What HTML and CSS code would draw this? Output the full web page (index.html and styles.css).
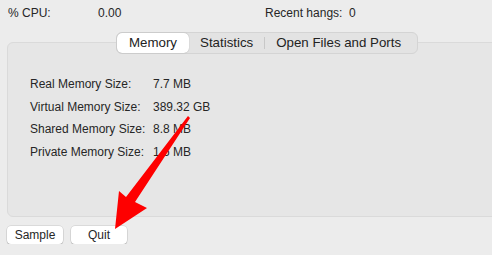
FILE: index.html
```html
<!DOCTYPE html>
<html lang="en">
<head>
  <meta charset="UTF-8">
  <title>Activity Monitor - Memory</title>
  <link rel="stylesheet" href="styles.css">
</head>
<body>
  <div class="window">
    <div class="stats-row">
      <span class="stat-label">% CPU:</span>
      <span class="stat-value">0.00</span>
      <span class="stat-hangs">Recent hangs:&nbsp; 0</span>
    </div>
    <div class="panel">
      <div class="tabs">
        <div class="tab active">Memory</div>
        <div class="tab">Statistics</div>
        <div class="tab-sep"></div>
        <div class="tab">Open Files and Ports</div>
      </div>
      <div class="mem-list">
        <div class="mem-row"><span class="mem-label">Real Memory Size:</span><span>7.7 MB</span></div>
        <div class="mem-row"><span class="mem-label">Virtual Memory Size:</span><span>389.32 GB</span></div>
        <div class="mem-row"><span class="mem-label">Shared Memory Size:</span><span>8.8 MB</span></div>
        <div class="mem-row"><span class="mem-label">Private Memory Size:</span><span>1.6 MB</span></div>
      </div>
    </div>
    <div class="actions">
      <button class="btn">Sample</button>
      <button class="btn">Quit</button>
    </div>
  </div>
  <svg class="arrow" width="492" height="255" viewBox="0 0 492 255">
    <polygon points="188,116 190,118 135,202 147,208 115,229 119,191 126,197" fill="#fe0000"/>
  </svg>
</body>
</html>
```

FILE: styles.css
```css
html, body {
  margin: 0;
  padding: 0;
}
body {
  background: #ececec;
  font-family: "Liberation Sans", Arial, sans-serif;
  font-size: 12px;
  color: #262626;
  width: 492px;
  height: 255px;
  overflow: hidden;
  position: relative;
}
.window {
  padding: 0 0 0 7px;
  overflow: hidden;
}
.stats-row {
  display: flex;
  align-items: center;
  height: 26px;
  padding-left: 1px;
}
.stat-label {
  width: 90px;
}
.stat-value {
  width: 167px;
}
.panel {
  margin-top: 16px;
  width: 520px;
  height: 175px;
  background: #e6e6e6;
  border: 1px solid #dadada;
  border-radius: 6px;
  box-sizing: border-box;
}
.tabs {
  display: flex;
  align-items: center;
  margin: -11px 0 0 108px;
  width: 302px;
  height: 22px;
  box-sizing: border-box;
  background: #e3e3e3;
  border: 1px solid #d4d4d4;
  border-radius: 6px;
  font-size: 13.3px;
}
.tab {
  padding: 0 11px;
  height: 20px;
  line-height: 20px;
  color: #222;
}
.tab.active {
  background: #fff;
  border-radius: 5px;
  padding: 0 12px;
  box-shadow: 0 0 1px rgba(0,0,0,0.35);
}
.tab-sep {
  width: 1px;
  height: 12px;
  background: #c8c8c8;
}
.mem-list {
  padding: 19px 0 0 22px;
}
.mem-row {
  display: flex;
  height: 22.7px;
  line-height: 22.7px;
}
.mem-label {
  width: 123px;
}
.actions {
  display: flex;
  gap: 8px;
  margin-top: 9px;
}
.btn {
  width: 56px;
  height: 18px;
  padding: 0;
  background: #fff;
  border: none;
  border-radius: 4px;
  box-shadow: 0 0 0 0.5px rgba(0,0,0,0.15), 0 1px 1px rgba(0,0,0,0.2);
  font-family: inherit;
  font-size: 12px;
  color: #262626;
}
.arrow {
  position: absolute;
  left: 0;
  top: 0;
  pointer-events: none;
}
```
